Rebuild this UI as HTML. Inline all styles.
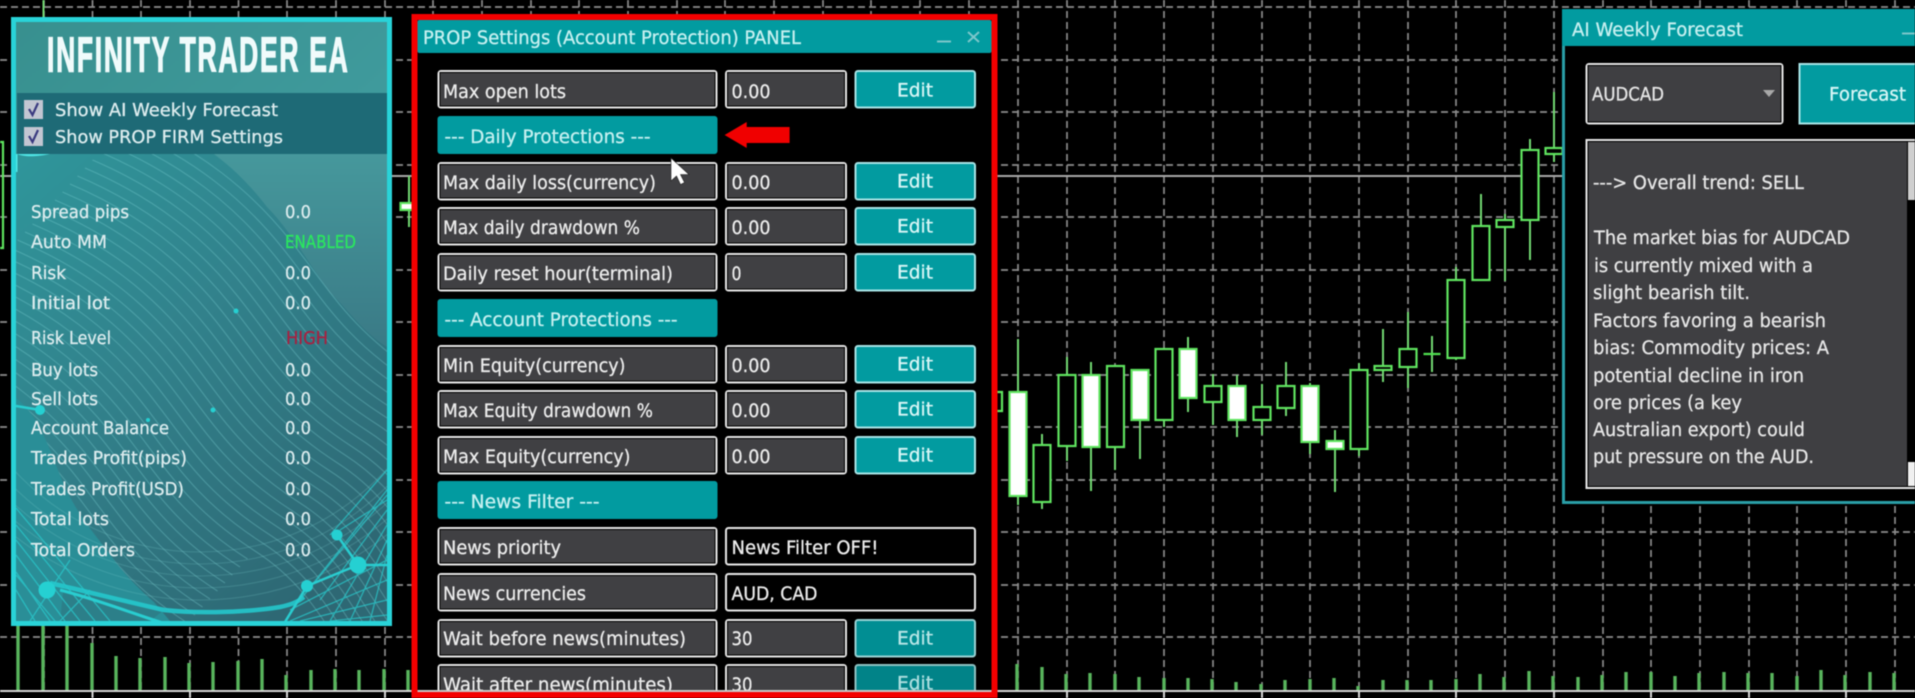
<!DOCTYPE html>
<html><head><meta charset="utf-8"><title>Infinity Trader EA</title>
<style>
html,body{margin:0;padding:0;background:#000;width:1915px;height:698px;overflow:hidden}
svg{display:block;filter:blur(.45px)}
text{font-family:"DejaVu Sans","Liberation Sans",sans-serif;font-size:18px;color:#e6e6e6;fill:currentColor;stroke:currentColor;stroke-width:.3px}
.l text{color:#dcecee;font-size:17.5px}
.p text{font-size:19px;color:#ececec}
.a text{font-size:18.5px;color:#e6e6e6}
.p .t,.a .t{color:#c6f0f0}
.p .e,.a .e{color:#d8f6f6}
</style></head><body>
<svg xmlns="http://www.w3.org/2000/svg" width="1915" height="698" viewBox="0 0 1915 698">
<defs>
<linearGradient id="top" x1="0" y1="0" x2="1" y2="0.4"><stop offset="0" stop-color="#38908f"/><stop offset="1" stop-color="#3f9a9c"/></linearGradient>
<linearGradient id="low" x1="0" y1="0" x2="0.7" y2="1"><stop offset="0" stop-color="#2f969b"/><stop offset=".45" stop-color="#32828c"/><stop offset="1" stop-color="#2e6874"/></linearGradient>
<linearGradient id="tr" x1="0" y1="0" x2="0" y2="1"><stop offset="0" stop-color="#46989c"/><stop offset="1" stop-color="#3a7a86"/></linearGradient>
<clipPath id="lc"><rect x="16" y="154" width="371" height="467"/></clipPath>
<clipPath id="pc"><rect x="417" y="20" width="575" height="670"/></clipPath>
<path id="w" d="M130 120C200 150 250 190 290 240S350 330 420 375S500 480 545 520" fill="none" stroke="#7fd4d6" stroke-width="1.1" stroke-opacity=".34"/>
<path id="v" d="M130 120C200 150 250 190 290 240S350 330 420 375" fill="none" stroke="#7fd4d6" stroke-width="1.1" stroke-opacity=".34"/>
<g id="lb"><rect x="1" y="1" width="278" height="36.5" rx="2.5" fill="#404043" stroke="#e6e6e6" stroke-width="2"/><rect x="2.5" y="2.5" width="275" height="33.5" fill="none" stroke="#000" stroke-width="1"/></g>
<g id="vb"><rect x="1" y="1" width="120" height="36.5" rx="2.5" fill="#404043" stroke="#e6e6e6" stroke-width="2"/><rect x="2.5" y="2.5" width="117" height="33.5" fill="none" stroke="#000" stroke-width="1"/></g>
<g id="wb"><rect x="1" y="1" width="249" height="36.5" rx="2.5" fill="#000" stroke="#e6e6e6" stroke-width="2"/></g>
<g id="eb"><rect x="1" y="1" width="119.5" height="36.5" rx="2.5" fill="#029ba0" stroke="#a8e4e6" stroke-width="2"/></g>
<rect id="sb" width="280" height="38" rx="3" fill="#029ba0"/>
</defs>
<rect width="1915" height="698" fill="#000"/>

<!-- grid -->
<path fill="none" stroke="#8c8c8c" stroke-width="1.7" stroke-dasharray="7 4" d="M0 7H1915M0 60H1915M0 112H1915M0 165H1915M0 217H1915M0 270H1915M0 322H1915M0 375H1915M0 427H1915M0 480H1915M0 532H1915M0 585H1915M0 637H1915"/>
<path fill="none" stroke="#8c8c8c" stroke-width="1.7" stroke-dasharray="7 4" d="M44 0V690M92.5 0V690M141 0V690M190 0V690M238.5 0V690M287 0V690M336 0V690M385 0V690M433 0V690M482 0V690M531 0V690M579 0V690M628 0V690M677 0V690M725 0V690M774 0V690M823 0V690M871 0V690M920 0V690M969 0V690M1018 0V690M1067 0V690M1115 0V690M1164 0V690M1213 0V690M1262 0V690M1310 0V690M1359 0V690M1408 0V690M1456 0V690M1505 0V690M1554 0V690M1603 0V690M1651 0V690M1700 0V690M1749 0V690M1797 0V690M1846 0V690M1895 0V690"/>
<path stroke="#a8a8a8" stroke-width="2" d="M0 176H1915"/>

<!-- volume bars -->
<path fill="none" stroke="#58b45c" stroke-width="3.4" d="M18 620V690M43 620V690M67 620V690M92 643V690M116 656V690M140 658V690M165 657V690M189 663V690M213 662V690M238 661V690M262 659V690M286 675V690M311 670V690M335 669V690M359 670V690M384 669V690M408 670V690M1017 664V690M1042 667V690M1066 674V690M1090 673V690M1115 674V690M1139 677V690M1164 678V690M1188 678V690M1212 679V690M1236 682V690M1261 684V690M1285 680V690M1310 679V690M1334 678V690M1358 686V690M1383 680V690M1407 680V690M1431 680V690M1456 679V690M1480 674V690M1504 677V690M1529 671V690M1553 676V690M1578 677V690M1602 675V690M1626 672V690M1651 672V690M1675 676V690M1699 673V690M1724 672V690M1748 673V690M1772 673V690M1797 676V690M1821 670V690M1845 675V690M1870 672V690M1894 673V690"/>
<!-- axis -->
<path stroke="#d6d6d6" stroke-width="2" d="M0 691H1915"/>
<path stroke="#d6d6d6" stroke-width="2" d="M92.5 691V698M190 691V698M287 691V698M385 691V698M1067 691V698M1164 691V698M1262 691V698M1359 691V698M1456 691V698M1554 691V698M1651 691V698M1749 691V698M1846 691V698"/>

<!-- candles -->
<g stroke="#5fe45f" stroke-width="2.2" fill="none">
<path stroke="#72d872" stroke-width="2" d="M43.500 0V20M409 176V227M1018 339V505M1042 434V509M1067 357V461M1091 362V491M1115 366V470M1140 369V459M1164 348V427M1188 337V412M1213 374V425M1237 375V437M1262 384V435M1286 362V416M1310 383V454M1335 430V492M1359 363V456M1383 329V382M1408 312V388M1432 336V372M1456 267V360M1481 194V226M1505 214V281M1530 139V260M1554 92V162"/>
<path d="M-5 142H3V248H-5M996 392H1002V411H996"/>
<g fill="#000">
<rect x="1033.500" y="445" width="17" height="57"/><rect x="1058.500" y="375" width="17" height="71"/><rect x="1107" y="366" width="17" height="81"/><rect x="1155.500" y="349" width="17" height="71"/><rect x="1204.500" y="386" width="17" height="16"/><rect x="1253.500" y="407" width="17" height="13"/><rect x="1277.500" y="386" width="17" height="22"/><rect x="1350.500" y="370" width="17" height="79"/><rect x="1399.500" y="349" width="17" height="18"/><rect x="1447.500" y="280" width="17" height="78"/><rect x="1472.500" y="226" width="17" height="54"/><rect x="1496.500" y="220" width="17" height="7"/><rect x="1521.500" y="150" width="17" height="70"/><rect x="1545.500" y="148" width="17" height="6"/><rect x="1374.500" y="366" width="17" height="4"/>
</g>
<g fill="#fff">
<rect x="1009.500" y="392" width="17" height="104"/><rect x="1082.500" y="375" width="17" height="72"/><rect x="1131.500" y="370" width="17" height="50"/><rect x="1179.500" y="349" width="17" height="49"/><rect x="1228.500" y="386" width="17" height="34"/><rect x="1301.500" y="386" width="17" height="56"/><rect x="1326.500" y="441" width="17" height="8"/>
<rect x="400.500" y="203" width="17" height="7"/>
</g>
<path stroke="#4fe04f" d="M1423.500 354H1440.500"/>
</g>

<!-- LEFT PANEL -->
<rect x="11" y="17" width="381" height="609" fill="#29d3d8"/>
<rect x="16" y="22" width="371" height="132" fill="url(#top)"/>
<g clip-path="url(#lc)">
<rect x="16" y="154" width="371" height="467" fill="url(#low)"/>
<path d="M214 154H387V347C360 330 345 305 330 293C310 265 290 230 267 207C250 185 235 170 214 154Z" fill="url(#tr)"/>
<path d="M16 154C24 156 30 158 50 154H16Z" fill="#4fe6e6"/>
<path d="M16 154V172" stroke="#4fe6e6" stroke-width="3"/>
<use href="#w"/><use href="#w" x="-7.5" y="8"/><use href="#w" x="-15" y="16"/><use href="#w" x="-22.5" y="24"/><use href="#w" x="-30" y="32"/><use href="#w" x="-37.5" y="40"/><use href="#w" x="-45" y="48"/><use href="#w" x="-52.5" y="56"/><use href="#w" x="-60" y="64"/><use href="#w" x="-67.5" y="72"/><use href="#w" x="-75" y="80"/><use href="#w" x="-82.5" y="88"/><use href="#w" x="-90" y="96"/><use href="#w" x="-97.5" y="104"/><use href="#w" x="-105" y="112"/><use href="#w" x="-112.5" y="120"/><use href="#w" x="-120" y="128"/><use href="#w" x="-127.5" y="136"/><use href="#w" x="-135" y="144"/><use href="#w" x="-142.5" y="152"/><use href="#w" x="-150" y="160"/><use href="#w" x="-157.5" y="168"/><use href="#w" x="-165" y="176"/>
<use href="#v" x="-172.5" y="184"/><use href="#v" x="-180" y="192"/><use href="#v" x="-187.5" y="200"/><use href="#v" x="-195" y="208"/><use href="#v" x="-202.5" y="216"/><use href="#v" x="-210" y="224"/><use href="#v" x="-217.5" y="232"/><use href="#v" x="-225" y="240"/><use href="#v" x="-232.5" y="248"/><use href="#v" x="-240" y="256"/>
<path d="M16 398C45 420 55 470 70 497C85 525 100 540 114 560C125 575 140 590 154 602L170 621H16Z" fill="#2a8e97"/>
<g fill="none" stroke="#7fd0d2" stroke-opacity=".22" stroke-width="1.1">
<circle cx="200" cy="300" r="252"/><circle cx="200" cy="300" r="264"/><circle cx="200" cy="300" r="276"/><circle cx="200" cy="300" r="288"/><circle cx="200" cy="300" r="300"/>
</g>
<path d="M64 583C100 596 130 604 164 610L150 621H60Z" fill="#2f6a76" opacity=".4"/>
<g fill="none" stroke="#29cdd0" stroke-opacity=".7" stroke-width="1.3">
<path d="M16 525L95 621M16 540L80 621M16 555L65 621M16 572L50 621M16 590L35 621M16 508L110 621M30 621L70 560M55 621L16 575M90 590L60 621"/>
<path d="M387 495L300 600M387 510L320 600M387 525L330 621M387 540L350 621M387 555L370 621M387 470L330 535M387 600L300 621M387 580L290 621M387 615L330 621M387 560L290 610M300 600L387 490M340 530L387 500"/>
</g>
<path d="M50 583C80 590 120 600 164 610C200 614 250 612 280 607C295 604 300 600 304 597" fill="none" stroke="#25c8cc" stroke-width="4.5" stroke-opacity=".9"/>
<path d="M60 590C100 600 150 620 170 625" fill="none" stroke="#29cdd0" stroke-width="3"/>
<path d="M285 622L307 586L358 565L337 535M358 565H387M16 406L40 410" fill="none" stroke="#29cdd0" stroke-width="2.500"/>
<g fill="#25d0d2"><circle cx="47" cy="590" r="8.500"/><circle cx="358" cy="565" r="8.500"/><circle cx="337" cy="535" r="5.500"/><circle cx="307" cy="586" r="6"/><circle cx="40" cy="410" r="5"/><circle cx="213" cy="410" r="2.500"/><circle cx="148" cy="420" r="2"/><circle cx="236" cy="311" r="2.500"/></g>
</g>
<rect x="17" y="93" width="370" height="61" fill="#1e6a76"/>
<rect x="24" y="100" width="19" height="19" fill="#c2c6d2"/><rect x="24" y="127" width="19" height="19" fill="#c2c6d2"/>
<path d="M29 109L32.500 115L38 103M29 136L32.500 142L38 130" fill="none" stroke="#3a3a80" stroke-width="2.200"/>
<text transform="translate(47 71.500) scale(.54 1)" textLength="557" lengthAdjust="spacing" style="font-family:'Liberation Sans',sans-serif;font-weight:bold;font-size:49px;color:#f0fbfb;stroke-width:1.4px">INFINITY TRADER EA</text>
<g class="l">
<text x="55" y="116" textLength="223" lengthAdjust="spacingAndGlyphs">Show AI Weekly Forecast</text>
<text x="55" y="143" textLength="228" lengthAdjust="spacingAndGlyphs">Show PROP FIRM Settings</text>
<text x="31" y="218" textLength="98" lengthAdjust="spacingAndGlyphs">Spread pips</text>
<text x="31" y="248" textLength="76" lengthAdjust="spacingAndGlyphs">Auto MM</text>
<text x="31" y="279" textLength="35" lengthAdjust="spacingAndGlyphs">Risk</text>
<text x="31" y="309" textLength="79" lengthAdjust="spacingAndGlyphs">Initial lot</text>
<text x="31" y="344" textLength="80" lengthAdjust="spacingAndGlyphs">Risk Level</text>
<text x="31" y="376" textLength="67" lengthAdjust="spacingAndGlyphs">Buy lots</text>
<text x="31" y="405" textLength="67" lengthAdjust="spacingAndGlyphs">Sell lots</text>
<text x="31" y="434" textLength="138" lengthAdjust="spacingAndGlyphs">Account Balance</text>
<text x="31" y="464" textLength="156" lengthAdjust="spacingAndGlyphs">Trades Profit(pips)</text>
<text x="31" y="495" textLength="153" lengthAdjust="spacingAndGlyphs">Trades Profit(USD)</text>
<text x="31" y="525" textLength="78" lengthAdjust="spacingAndGlyphs">Total lots</text>
<text x="31" y="556" textLength="104" lengthAdjust="spacingAndGlyphs">Total Orders</text>
<text x="285" y="218" textLength="26" lengthAdjust="spacingAndGlyphs">0.0</text>
<text x="285" y="248" textLength="71" lengthAdjust="spacingAndGlyphs" style="color:#2ae85e">ENABLED</text>
<text x="285" y="279" textLength="26" lengthAdjust="spacingAndGlyphs">0.0</text>
<text x="285" y="309" textLength="26" lengthAdjust="spacingAndGlyphs">0.0</text>
<text x="286" y="344" textLength="42" lengthAdjust="spacingAndGlyphs" style="color:#a82040">HIGH</text>
<text x="285" y="376" textLength="26" lengthAdjust="spacingAndGlyphs">0.0</text>
<text x="285" y="405" textLength="26" lengthAdjust="spacingAndGlyphs">0.0</text>
<text x="285" y="434" textLength="26" lengthAdjust="spacingAndGlyphs">0.0</text>
<text x="285" y="464" textLength="26" lengthAdjust="spacingAndGlyphs">0.0</text>
<text x="285" y="495" textLength="26" lengthAdjust="spacingAndGlyphs">0.0</text>
<text x="285" y="525" textLength="26" lengthAdjust="spacingAndGlyphs">0.0</text>
<text x="285" y="556" textLength="26" lengthAdjust="spacingAndGlyphs">0.0</text>
</g>

<!-- PROP PANEL -->
<rect x="417" y="20" width="575" height="672" fill="#000"/>
<g clip-path="url(#pc)" class="p">
<rect x="417.500" y="20" width="574" height="33" rx="2" fill="#029ba0"/>
<text class="t" x="423" y="44" textLength="378" lengthAdjust="spacingAndGlyphs">PROP Settings (Account Protection) PANEL</text>
<path d="M937 41.500H951M968 32L979 42M979 32L968 42" stroke="#7cc6ca" stroke-width="2" fill="none"/>

<use href="#lb" x="437.500" y="70"/><use href="#lb" x="437.500" y="162"/><use href="#lb" x="437.500" y="207"/><use href="#lb" x="437.500" y="253"/><use href="#lb" x="437.500" y="345"/><use href="#lb" x="437.500" y="390"/><use href="#lb" x="437.500" y="436"/><use href="#lb" x="437.500" y="527"/><use href="#lb" x="437.500" y="573"/><use href="#lb" x="437.500" y="619"/><use href="#lb" x="437.500" y="652" opacity="0"/><use href="#lb" x="437.500" y="664"/>
<use href="#vb" x="725" y="70"/><use href="#vb" x="725" y="162"/><use href="#vb" x="725" y="207"/><use href="#vb" x="725" y="253"/><use href="#vb" x="725" y="345"/><use href="#vb" x="725" y="390"/><use href="#vb" x="725" y="436"/><use href="#vb" x="725" y="619"/><use href="#vb" x="725" y="664"/>
<use href="#wb" x="725" y="527"/><use href="#wb" x="725" y="573"/>
<use href="#eb" x="854.500" y="70"/><use href="#eb" x="854.500" y="162"/><use href="#eb" x="854.500" y="207"/><use href="#eb" x="854.500" y="253"/><use href="#eb" x="854.500" y="345"/><use href="#eb" x="854.500" y="390"/><use href="#eb" x="854.500" y="436"/><use href="#eb" x="854.500" y="619" opacity=".92"/><use href="#eb" x="854.500" y="664" opacity=".85"/>
<use href="#sb" x="437.500" y="116"/><use href="#sb" x="437.500" y="299"/><use href="#sb" x="437.500" y="481"/>

<text class="t" x="444.500" y="143" textLength="206" lengthAdjust="spacingAndGlyphs">--- Daily Protections ---</text>
<text class="t" x="444.500" y="326" textLength="233" lengthAdjust="spacingAndGlyphs">--- Account Protections ---</text>
<text class="t" x="444.500" y="508" textLength="155" lengthAdjust="spacingAndGlyphs">--- News Filter ---</text>

<text x="443" y="98" textLength="123" lengthAdjust="spacingAndGlyphs">Max open lots</text>
<text x="443" y="189" textLength="213" lengthAdjust="spacingAndGlyphs">Max daily loss(currency)</text>
<text x="443" y="234" textLength="197" lengthAdjust="spacingAndGlyphs">Max daily drawdown %</text>
<text x="443" y="280" textLength="230" lengthAdjust="spacingAndGlyphs">Daily reset hour(terminal)</text>
<text x="443" y="372" textLength="182.500" lengthAdjust="spacingAndGlyphs">Min Equity(currency)</text>
<text x="443" y="417" textLength="210" lengthAdjust="spacingAndGlyphs">Max Equity drawdown %</text>
<text x="443" y="463" textLength="187.500" lengthAdjust="spacingAndGlyphs">Max Equity(currency)</text>
<text x="443" y="554" textLength="118" lengthAdjust="spacingAndGlyphs">News priority</text>
<text x="443" y="600" textLength="143" lengthAdjust="spacingAndGlyphs">News currencies</text>
<text x="443" y="645" textLength="243" lengthAdjust="spacingAndGlyphs">Wait before news(minutes)</text>
<text x="443" y="691" textLength="230" lengthAdjust="spacingAndGlyphs">Wait after news(minutes)</text>

<text x="731.500" y="98" textLength="39" lengthAdjust="spacingAndGlyphs">0.00</text>
<text x="731.500" y="189" textLength="39" lengthAdjust="spacingAndGlyphs">0.00</text>
<text x="731.500" y="234" textLength="39" lengthAdjust="spacingAndGlyphs">0.00</text>
<text x="731.500" y="280" textLength="10" lengthAdjust="spacingAndGlyphs">0</text>
<text x="731.500" y="372" textLength="39" lengthAdjust="spacingAndGlyphs">0.00</text>
<text x="731.500" y="417" textLength="39" lengthAdjust="spacingAndGlyphs">0.00</text>
<text x="731.500" y="463" textLength="39" lengthAdjust="spacingAndGlyphs">0.00</text>
<text x="731.500" y="554" textLength="147" lengthAdjust="spacingAndGlyphs">News Filter OFF!</text>
<text x="731.500" y="600" textLength="86" lengthAdjust="spacingAndGlyphs">AUD, CAD</text>
<text x="731.500" y="645" textLength="21" lengthAdjust="spacingAndGlyphs">30</text>
<text x="731.500" y="691" textLength="21" lengthAdjust="spacingAndGlyphs">30</text>

<text class="e" x="897" y="96.500" textLength="36" lengthAdjust="spacingAndGlyphs">Edit</text>
<text class="e" x="897" y="187.500" textLength="36" lengthAdjust="spacingAndGlyphs">Edit</text>
<text class="e" x="897" y="232.500" textLength="36" lengthAdjust="spacingAndGlyphs">Edit</text>
<text class="e" x="897" y="278.500" textLength="36" lengthAdjust="spacingAndGlyphs">Edit</text>
<text class="e" x="897" y="370.500" textLength="36" lengthAdjust="spacingAndGlyphs">Edit</text>
<text class="e" x="897" y="415.500" textLength="36" lengthAdjust="spacingAndGlyphs">Edit</text>
<text class="e" x="897" y="461.500" textLength="36" lengthAdjust="spacingAndGlyphs">Edit</text>
<text class="e" x="897" y="644.500" textLength="36" lengthAdjust="spacingAndGlyphs" opacity=".85">Edit</text>
<text class="e" x="897" y="689.500" textLength="36" lengthAdjust="spacingAndGlyphs" opacity=".8">Edit</text>
</g>
<path stroke="#c8c8c8" stroke-width="2" d="M417 691H992"/>
<path d="M724.600 135L746.700 122V127H789.600V143H746.700V148Z" fill="#f00000"/>
<path d="M671 158V181L676.500 176L680.500 184.500L684.500 182.500L680.500 174.500H689Z" fill="#fff" stroke="#222" stroke-width=".6"/>
<rect x="414.500" y="17" width="580" height="678" fill="none" stroke="#f40000" stroke-width="6"/>

<!-- AI PANEL -->
<g class="a">
<rect x="1562" y="9" width="353" height="495" fill="#000"/>
<path d="M1915 502.500H1563.500V10.500H1915" fill="none" stroke="#2a9ea6" stroke-width="3"/>
<rect x="1562" y="9" width="353" height="37" fill="#029ba0"/>
<text class="t" x="1572" y="36" textLength="171" lengthAdjust="spacingAndGlyphs">AI Weekly Forecast</text>
<path d="M1902 33.500H1915" stroke="#7cc6ca" stroke-width="2"/>
<rect x="1586.500" y="64" width="196" height="59.500" rx="2.500" fill="#3f3f42" stroke="#e6e6e6" stroke-width="2"/>
<rect x="1588" y="65.500" width="193" height="56.500" fill="none" stroke="#000"/>
<text x="1592" y="100.700" textLength="72" lengthAdjust="spacingAndGlyphs">AUDCAD</text>
<path d="M1763 90H1775L1769 97Z" fill="#a8a8a8"/>
<rect x="1799.500" y="64" width="115.500" height="59.500" fill="#029ba0"/>
<path d="M1915 64H1799.500V123.500H1915" fill="none" stroke="#a8e4e6" stroke-width="2"/>
<text class="e" x="1829" y="100.700" textLength="77" lengthAdjust="spacingAndGlyphs">Forecast</text>
<rect x="1586.500" y="140" width="328.500" height="348" fill="#3f3f42"/>
<path d="M1915 140H1586.500V488H1915" fill="none" stroke="#e6e6e6" stroke-width="2"/>
<path d="M1915 141.500H1588V486.500H1915" fill="none" stroke="#000"/>
<rect x="1907" y="141" width="8" height="346" fill="#000"/>
<rect x="1908" y="142" width="7" height="58" fill="#cfcfcf"/>
<rect x="1908" y="462" width="7" height="24" fill="#f0f0f0"/>
<text x="1593" y="189" textLength="211" lengthAdjust="spacingAndGlyphs">---&gt; Overall trend: SELL</text>
<text x="1594" y="244" textLength="256" lengthAdjust="spacingAndGlyphs">The market bias for AUDCAD</text>
<text x="1594" y="272" textLength="219" lengthAdjust="spacingAndGlyphs">is currently mixed with a</text>
<text x="1593" y="299" textLength="157" lengthAdjust="spacingAndGlyphs">slight bearish tilt.</text>
<text x="1593" y="327" textLength="233" lengthAdjust="spacingAndGlyphs">Factors favoring a bearish</text>
<text x="1593" y="354" textLength="236" lengthAdjust="spacingAndGlyphs">bias: Commodity prices: A</text>
<text x="1593" y="382" textLength="211" lengthAdjust="spacingAndGlyphs">potential decline in iron</text>
<text x="1593" y="409" textLength="149" lengthAdjust="spacingAndGlyphs">ore prices (a key</text>
<text x="1593" y="436" textLength="212" lengthAdjust="spacingAndGlyphs">Australian export) could</text>
<text x="1593" y="463" textLength="221" lengthAdjust="spacingAndGlyphs">put pressure on the AUD.</text>
</g>
</svg>
</body></html>
